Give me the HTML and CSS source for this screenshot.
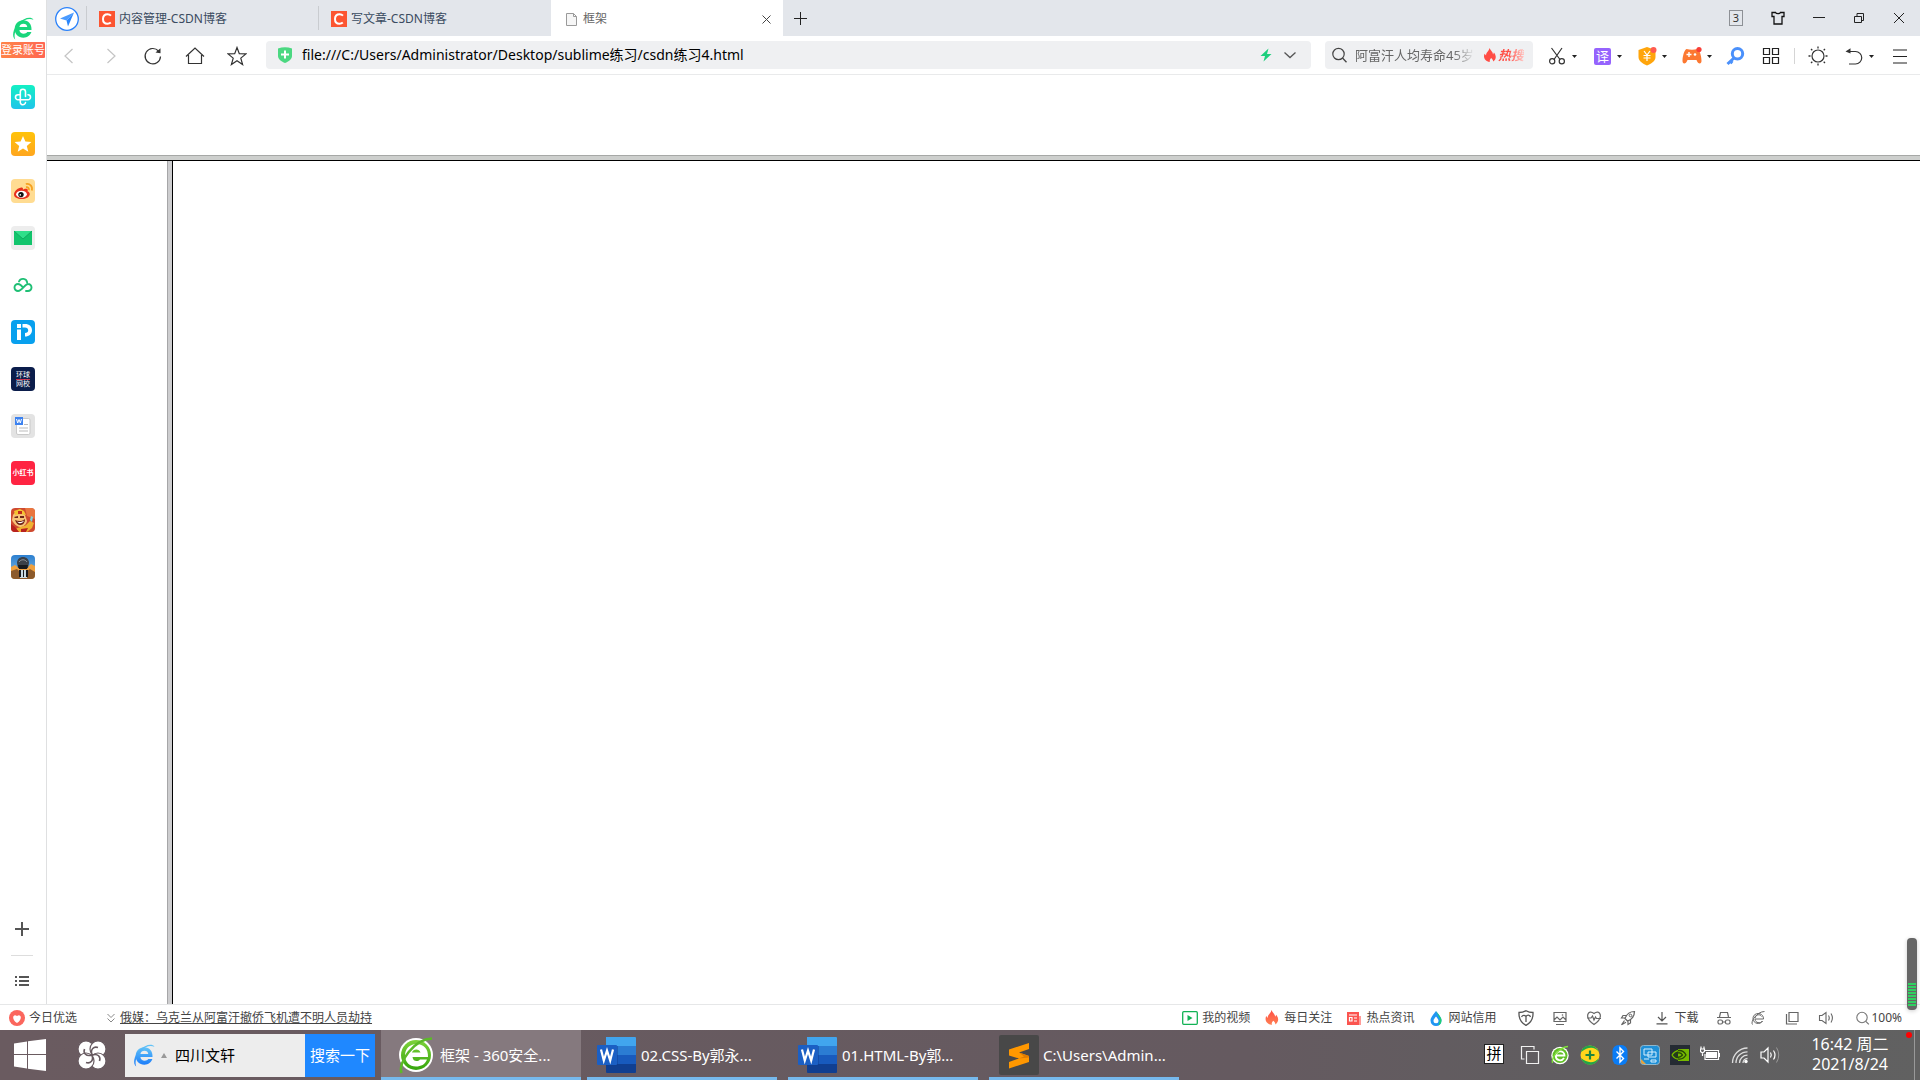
FILE: index.html
```html
<!DOCTYPE html>
<html lang="zh-CN">
<head>
    <meta charset="UTF-8">
    <meta name="viewport" content="width=device-width, initial-scale=1.0">
    <title>框架</title>
    <link rel="stylesheet" href="styles.css">
</head>
<body>
    <!-- shared icons -->
    <svg class="sprite" width="0" height="0" aria-hidden="true">
        <defs>
            <linearGradient id="gTeal" x1="0" y1="0" x2="0" y2="1"><stop offset="0" stop-color="#14f0c4"/><stop offset="1" stop-color="#1fc4ea"/></linearGradient>
            <linearGradient id="gGold" x1="0" y1="0" x2="0" y2="1"><stop offset="0" stop-color="#ffc30a"/><stop offset="1" stop-color="#ffa61e"/></linearGradient>
            <linearGradient id="gIe" x1="0" y1="0" x2="0" y2="1"><stop offset="0" stop-color="#63c4f7"/><stop offset="1" stop-color="#1c7dfa"/></linearGradient>
            <linearGradient id="gGreen" x1="0" y1="0" x2="0" y2="1"><stop offset="0" stop-color="#7fd23c"/><stop offset="1" stop-color="#35a50c"/></linearGradient>
            <linearGradient id="gRed" x1="0" y1="0" x2="0" y2="1"><stop offset="0" stop-color="#ff4f45"/><stop offset="1" stop-color="#ff8053"/></linearGradient>
            <linearGradient id="gSky" x1="0" y1="0" x2="0" y2="1"><stop offset="0" stop-color="#2c7fd0"/><stop offset="1" stop-color="#8cc3e6"/></linearGradient>
        </defs>
        <symbol id="caret" viewBox="0 0 5 3"><path d="M0 0h5L2.500 3z" fill="#222"/></symbol>
        <symbol id="csdn" viewBox="0 0 16 16"><path fill="#fc5531" d="M0 0h16v16H0z"/><path d="M12 4.600A5 5 0 0 0 8.600 3.200C5.600 3.200 4 5.400 4 8s1.500 4.800 4.400 4.800c1.400 0 2.500-.4 3.400-1.200" fill="none" stroke="#fff" stroke-width="2"/></symbol>
        <symbol id="browserE" viewBox="0 0 24 24"><path d="M20.500 14H8.400c.3 2.500 2 3.800 4.300 3.800 1.600 0 2.800-.6 3.600-1.700h4.100c-1.200 3.500-4 5.600-8 5.600-5.200 0-8.700-3.600-8.700-8.700S7.200 4.300 12.300 4.300s8.500 3.800 8.200 9.700zM16.300 11c-.4-2.100-1.700-3.200-3.800-3.200-2.200 0-3.600 1.100-4.100 3.200z"/><path d="M4.200 23.500C.7 21 1.500 13 7.500 7.200 13 1.800 20 .2 22.500 3.800c-5-2-9.600.3-13.400 4.200-4.600 4.700-6.600 10.500-4.900 15.500z"/></symbol>
        <symbol id="word" viewBox="0 0 40 38">
            <path fill="#41a5ee" d="M9 1h29a1 1 0 0 1 1 1v8H9z"/><path fill="#2b7cd3" d="M9 10h30v9H9z"/><path fill="#185abd" d="M9 19h30v9H9z"/><path fill="#103f91" d="M9 28h30v8a1 1 0 0 1-1 1H10a1 1 0 0 1-1-1z"/>
            <path fill="#103f91" opacity=".45" d="M9 10h12v20H9z"/><rect y="9" width="20" height="20" rx="1" fill="#1b5fc4"/>
            <path d="M4 13.500l2.800 11L10 14.500l3.200 10 2.800-11" fill="none" stroke="#fff" stroke-width="2.200"/>
        </symbol>
        <symbol id="flame" viewBox="0 0 14 16"><path d="M6.500 0c.7 2.400 3.800 4.400 4 7.300l1-2.300c2.800 3.500 3 7.500-.8 10.500-.3-2-1.200-3-2.300-4-1.300 1.200-1.800 2.300-1.700 4.500C1.500 15.300-1.200 11 .8 6.500l1.700 2C2.300 4.800 5.800 3.800 6.500 0z"/></symbol>
    </svg>

    <div class="browser">
        <nav class="sidebar" aria-label="侧边栏">
            <button class="account">
                <svg width="24" height="24" fill="#19d67c"><use href="#browserE"/></svg>
                <span>登录账号</span>
            </button>
            <div class="apps">
                <button aria-label="360健康"><svg viewBox="0 0 24 24"><rect width="24" height="24" rx="4" fill="url(#gTeal)"/><path d="M14.500 11.500V6.800a2.600 2.600 0 0 0-5.200 0v10a2.600 2.600 0 0 0 5.200.7M9 9.700H7a2.500 2.500 0 0 0 0 5h10a2.500 2.500 0 0 0 0-5" fill="none" stroke="#fff" stroke-width="1.600" stroke-linecap="round"/></svg></button>
                <button aria-label="收藏夹"><svg viewBox="0 0 24 24"><rect width="24" height="24" rx="4" fill="url(#gGold)"/><path fill="#fff" d="M12 4l2.400 5.500 6 .5-4.600 3.900 1.500 5.900L12 16.600l-5.300 3.200 1.500-5.900L3.600 10l6-.5z"/></svg></button>
                <button aria-label="微博"><svg viewBox="0 0 24 24"><rect width="24" height="24" rx="4" fill="#ffdc92"/><path fill="#e8301c" d="M3 15.500c0-3.500 5-7.500 8-7 1.500.3.800 2 .8 2s3.500-1.500 4.700-.3c.8.900 0 2 0 2s2.300.6 2.300 2.700c0 3-4 5.100-8.200 5.100-4.100 0-7.600-1.700-7.600-4.500z"/><ellipse cx="10.500" cy="15.300" rx="5.400" ry="3.500" fill="#fff"/><circle cx="10" cy="15.600" r="2.700" fill="#111"/><circle cx="9.300" cy="15.900" r=".8" fill="#fff"/><path d="M15 8.200c2-.4 3.400 1 2.900 3M14.800 5c4-.9 7.200 2.200 6 6.500" fill="none" stroke="#f5a01e" stroke-width="1.700"/></svg></button>
                <button aria-label="邮箱"><svg viewBox="0 0 24 24"><rect width="24" height="24" rx="4" fill="#ededed"/><path fill="#12c46c" d="M3 5h18v14H3z"/><path fill="#2fdf8a" d="M3 5h18l-9 8z"/><path d="M3 5l9 8 9-8" fill="none" stroke="#0da158" stroke-width=".8"/></svg></button>
                <button aria-label="云盘"><svg viewBox="0 0 24 24"><path d="M15 18h2a3.500 3.500 0 0 0 0-7c-3.500 0-5.500 7-10 7a3.500 3.500 0 1 1 0-7c2.200 0 3.500 1.500 5 3.500M8 8.500a4.300 4.300 0 0 1 8.200 1" fill="none" stroke="#1fbf75" stroke-width="1.900" stroke-linecap="round"/></svg></button>
                <button aria-label="PP助手"><svg viewBox="0 0 24 24"><rect width="24" height="24" rx="4" fill="#08a0ee"/><path fill="#fff" d="M6 4h4v4H6zM6 9.500h4V20H6zM11.500 4H14c4.500 0 7 2.500 7 6.300 0 3.700-2.800 6.300-7 6.300V13c2 0 3.200-1 3.200-2.700 0-1.800-1.200-2.900-3.200-2.900h-2.500z"/></svg></button>
                <button class="app-text navy"><span>环球</span><span>网校</span></button>
                <button aria-label="文档"><svg viewBox="0 0 24 24"><rect width="24" height="24" rx="4" fill="#e3e3e3"/><rect x="5.500" y="4.500" width="13.500" height="16" rx="1.500" fill="#fff" stroke="#c9c9c9"/><path d="M13 10.500h4M8 14h9M8 17h9" stroke="#bbb"/><path fill="#3c82f0" d="M4 3h8v8H4z"/><path d="M5.500 5l1.200 4L8 5.500 9.300 9l1.200-4" fill="none" stroke="#fff"/></svg></button>
                <button class="app-text red"><span>小红书</span></button>
                <button aria-label="游戏"><svg viewBox="0 0 24 24"><rect width="24" height="24" rx="4" fill="#cf4a30"/><path fill="#e9763f" d="M14 0h6a4 4 0 0 1 4 4v7l-8-3z"/><path fill="#f7c277" d="M2 7c2-4 9-4 12 0l2 6c-1 4-4 6-7 6s-7-4-8-7z"/><path fill="#f4c330" d="M3 3l3-1 3-1 4 2 2 4-5-1-6 1z"/><path fill="#c22b1d" d="M7 3h4v3H7z"/><path fill="#6e2417" d="M3 9l4-1v2H4zM9 8l4 0v2H9zM4 12c4 2 8 1 10-1 0 5-3 6-5 6s-4-2-5-5z"/><path fill="#fff" d="M6 13.500c3 1 5 .5 7-1-1 3-5 4-7 1z"/><path fill="#f0b232" d="M5 21c4-3 9-2 11-5l3-3 4 2-2 5-5 4H8z"/><path fill="#b9221e" d="M0 16l4 3 4 5H4a4 4 0 0 1-4-4zM10 21l7-1-2 4h-5z"/><path fill="#7fd5dc" d="M20 8l2 1-1 5-2-2z"/></svg></button>
                <button aria-label="吃鸡"><svg viewBox="0 0 24 24"><rect width="24" height="24" rx="4" fill="url(#gSky)"/><path fill="#f0a13f" d="M0 12l4-2 4 3h8l4-4 4 2v9a4 4 0 0 1-4 4H4a4 4 0 0 1-4-4z"/><path fill="#8c5a2b" d="M0 16l6-2 2 2h8l3-2 5 3v3a4 4 0 0 1-4 4H4a4 4 0 0 1-4-4z"/><path fill="#c9dbe4" d="M9 15h7v8H9z"/><path fill="#3a4048" d="M6 8c0-8 12-8 12 0l-1 5H7z"/><path fill="#171a1e" d="M7 10h10l-1 4H8zM8 15h2v7H8zM12 15h1v7h-1zM15 15h2v7h-2z"/><path d="M8 7c2-3 6-3 8 0" fill="none" stroke="#8b9299"/></svg></button>
            </div>
            <div class="sidebar-bottom">
                <button aria-label="添加"><svg width="14" height="14"><path d="M7 0v14M0 7h14" stroke="#555" stroke-width="2"/></svg></button>
                <hr>
                <button aria-label="列表"><svg width="14" height="10"><path d="M0 1h2M4 1h10M0 5h2M4 5h10M0 9h2M4 9h10" stroke="#555" stroke-width="2"/></svg></button>
            </div>
        </nav>

        <div class="main">
            <header class="tabbar">
                <button class="nav-logo" aria-label="导航"><svg width="24" height="24"><circle cx="12" cy="12" r="11.300" fill="#fff" stroke="#2b82fa" stroke-width="1.300"/><path fill="#2b86fb" d="M19 5.500L13 19.500l-1.500-6z"/><path fill="#4a9bff" d="M19 5.500L5 11.500l6.500 2z"/></svg></button>
                <button class="tab"><svg width="16" height="16"><use href="#csdn"/></svg><span>内容管理-CSDN博客</span></button>
                <button class="tab"><svg width="16" height="16"><use href="#csdn"/></svg><span>写文章-CSDN博客</span></button>
                <div class="tab active">
                    <svg width="16" height="16"><path d="M3.500 2.500h7l3 3v9h-10zM10.500 2.500v3h3" fill="#f6f6f6" stroke="#9a9a9a"/></svg><span>框架</span>
                    <button class="tab-close" aria-label="关闭标签"><svg width="9" height="9"><path d="M.5.500l8 8M8.500.500l-8 8" stroke="#444"/></svg></button>
                </div>
                <button class="new-tab" aria-label="新标签"><svg width="13" height="13"><path d="M6.500 0v13M0 6.500h13" stroke="#222"/></svg></button>
                <div class="window-buttons">
                    <button class="tab-count">3</button>
                    <button aria-label="皮肤"><svg width="14" height="14"><path d="M1 1.500h3.500c.7 1.600 4.300 1.600 5 0H13v4h-2V13H3V5.500H1z" fill="none" stroke="#111" stroke-width="1.300"/></svg></button>
                    <button aria-label="最小化"><svg width="12" height="14"><path d="M0 6.500h12" stroke="#222"/></svg></button>
                    <button aria-label="还原"><svg width="12" height="12"><path d="M1.500 4.500h7v6h-7zM4 4V1.500h6.500v7H9" fill="none" stroke="#222"/></svg></button>
                    <button aria-label="关闭"><svg width="12" height="12"><path d="M1 1l10 10M11 1L1 11" stroke="#222"/></svg></button>
                </div>
            </header>

            <div class="toolbar">
                <div class="nav-buttons">
                    <button aria-label="后退"><svg width="20" height="20"><path d="M13.500 3L6 10l7.500 7" fill="none" stroke="#c4c4c4" stroke-width="1.200"/></svg></button>
                    <button aria-label="前进"><svg width="20" height="20"><path d="M6.500 3l7.500 7-7.500 7" fill="none" stroke="#c4c4c4" stroke-width="1.200"/></svg></button>
                    <button aria-label="刷新"><svg width="20" height="20"><path d="M17.500 10.500A7.700 7.700 0 1 1 15.500 5" fill="none" stroke="#333" stroke-width="1.200"/><path d="M12.500 6.500l5 .8V2.200z" fill="#333"/></svg></button>
                    <button aria-label="主页"><svg width="20" height="20"><path d="M1 10.500l9-8.500 9 8.500M3.500 9v8.500h13V9" fill="none" stroke="#333" stroke-width="1.200"/></svg></button>
                    <button aria-label="收藏"><svg width="20" height="20"><path d="M10 1.500l2.300 6.200 6.700.2-5.200 4.200 1.800 6.400L10 14.800l-5.600 3.700 1.800-6.400L1 7.900l6.700-.2z" fill="none" stroke="#333" stroke-width="1.200"/></svg></button>
                </div>
                <div class="address">
                    <svg width="14" height="16"><path fill="#4bd881" d="M0 1.500Q7-1 14 1.500V9c0 3.500-3.500 5.500-7 7-3.500-1.500-7-3.500-7-7z"/><path d="M7 3.500v8M3 7.500h8" stroke="#fff" stroke-width="2"/></svg>
                    <input type="text" aria-label="地址" value="file:///C:/Users/Administrator/Desktop/sublime练习/csdn练习4.html">
                    <button aria-label="极速模式"><svg width="12" height="14"><path fill="#1dcf7c" d="M8.500.500L.5 8H5l-1.500 5.500L11.500 6H7z"/></svg></button>
                    <button aria-label="展开"><svg width="14" height="14"><path d="M1.500 4.500l5.500 5 5.500-5" fill="none" stroke="#555" stroke-width="1.300"/></svg></button>
                </div>
                <div class="search">
                    <svg width="15" height="16"><circle cx="6.500" cy="7" r="5.700" fill="none" stroke="#444" stroke-width="1.200"/><path d="M10.500 11l4 4.300" stroke="#444" stroke-width="1.300"/></svg>
                    <input type="text" aria-label="搜索" placeholder="阿富汗人均寿命45岁">
                    <button class="hot"><svg width="14" height="14" fill="#ff4d45"><use href="#flame"/></svg><span>热搜</span></button>
                </div>
                <div class="tools">
                    <button class="tool" aria-label="截图"><svg width="20" height="20"><path d="M4.500 2l8.500 11.500M15 2L7 13.500" stroke="#333" fill="none" stroke-width="1.200"/><circle cx="5.200" cy="15.300" r="2.600" fill="none" stroke="#333" stroke-width="1.200"/><circle cx="14.800" cy="15.300" r="2.600" fill="none" stroke="#333" stroke-width="1.200"/></svg><svg width="5" height="3"><use href="#caret"/></svg></button>
                    <button class="tool"><span class="translate">译</span><svg width="5" height="3"><use href="#caret"/></svg></button>
                    <button class="tool" aria-label="网购"><svg width="20" height="20"><path fill="#ffa50c" d="M10 1l8.500 3v7c0 4-4 6.500-8.500 8.500C5.500 17.500 1.500 15 1.500 11V4z"/><path d="M7 5l3 4 3-4M6.500 9.500h7M6.500 12h7M10 9v6" fill="none" stroke="#fff" stroke-width="1.200"/><circle cx="16.500" cy="4" r="3" fill="#ff5b50"/></svg><svg width="5" height="3"><use href="#caret"/></svg></button>
                    <button class="tool" aria-label="游戏"><svg width="20" height="20"><path fill="#fc7831" d="M4.500 3Q10 4.500 15.500 3c2 .5 4 7 4 12 0 3.500-3.500 3.500-5-1h-9c-1.500 4.500-5 4.500-5 1 0-5 2-11.500 4-12z"/><path d="M7 6v5M4.500 8.500h5" stroke="#fff" stroke-width="1.400"/><circle cx="13" cy="8.500" r="1.300" fill="#fff"/><circle cx="17" cy="3.500" r="2.600" fill="#f93e38"/></svg><svg width="5" height="3"><use href="#caret"/></svg></button>
                </div>
                <div class="tools tools-right">
                    <button class="tool" aria-label="密码"><svg width="20" height="20"><circle cx="12.500" cy="7.800" r="5.200" fill="none" stroke="#4a90fb" stroke-width="3"/><path d="M9 12l-6.500 6M5 15l2.500 2" stroke="#4a90fb" stroke-width="3"/></svg></button>
                    <button class="tool" aria-label="扩展"><svg width="20" height="20"><path d="M2.500 2.500h6v6h-6zM11.500 2.500h6v6h-6zM2.500 11.500h6v6h-6zM11.500 11.500h6v6h-6z" fill="none" stroke="#222" stroke-width="1.200"/></svg></button>
                    <span class="tool-sep"></span>
                    <button class="tool" aria-label="护眼"><svg width="20" height="20"><circle cx="10" cy="10" r="6" fill="none" stroke="#333" stroke-width="1.200"/><path d="M10 .5v2M10 17.500v2M.5 10h2M17.500 10h2M3 3l1.300 1.300M15.700 15.700L17 17M3 17l1.300-1.300M15.700 4.300L17 3" stroke="#333" stroke-width="1.300"/></svg></button>
                    <button class="tool" aria-label="恢复"><svg width="20" height="20"><path d="M3 5.500h8.500a6 6 0 0 1 0 12.500H5" fill="none" stroke="#333" stroke-width="1.200"/><path fill="#333" d="M1.500 5.500l5-3.200v5.200z"/></svg><svg width="5" height="3"><use href="#caret"/></svg></button>
                    <button class="tool" aria-label="菜单"><svg width="20" height="20"><path d="M3 4h14M3 10.500h14M3 17h14" stroke="#222" stroke-width="1.200"/></svg></button>
                </div>
            </div>

            <div class="frameset">
                <section class="frame-top"></section>
                <div class="frame-row">
                    <section class="frame-left"></section>
                    <section class="frame-main"></section>
                </div>
            </div>
        </div>
    </div>

    <footer class="statusbar">
        <a class="status-item" href="#"><svg width="16" height="16"><circle cx="8" cy="8" r="8" fill="#fb665d"/><path fill="#fff" d="M8 13C1.500 8.500 4.500 3 8 6c3.500-3 6.500 2.500 0 7z"/></svg>今日优选</a>
        <a class="news" href="#"><svg width="8" height="10"><path d="M.5 1L4 4.500 7.500 1M.5 5.500L4 9l3.500-3.500" fill="none" stroke="#888"/></svg><span>俄媒：乌克兰从阿富汗撤侨飞机遭不明人员劫持</span></a>
        <div class="status-links">
            <a class="status-item" href="#"><svg width="16" height="16"><rect x=".7" y="1.700" width="14.600" height="12.600" rx="1" fill="none" stroke="#12b255" stroke-width="1.300"/><path fill="#12b255" d="M5.500 5v6l5-3z"/></svg>我的视频</a>
            <a class="status-item" href="#"><svg width="16" height="15" fill="url(#gRed)"><use href="#flame"/></svg>每日关注</a>
            <a class="status-item" href="#"><svg width="16" height="16"><path fill="#ff9b98" d="M10 6h5v9h-5z"/><path fill="#fb544f" d="M1 2h12v13H1z"/><path d="M3 5h8M3.500 7.500H6V11H3.500zM8 8h3M8 11h3" fill="none" stroke="#fff" stroke-width="1.200"/></svg>热点资讯</a>
            <a class="status-item" href="#"><svg width="16" height="16"><path fill="#2196f3" d="M8 1c3 4 5.500 6.500 5.500 9.500a5.500 5.500 0 0 1-11 0C2.500 7.500 5 5 8 1z"/><path fill="#1fcf74" d="M8 1c3 4 5.500 6.500 5.500 9.500 0 2.500-1.500 4.300-3 5L12 9z"/><path fill="#fff" d="M8 6.500c1.500 2 2.500 3 2.500 4.200a2.500 2.500 0 0 1-5 0C5.500 9.500 6.500 8.500 8 6.500z"/></svg>网站信用</a>
        </div>
        <div class="status-icons">
            <button aria-label="安全"><svg width="16" height="16"><path d="M8 .7Q11 2.500 15 2.500c.3 6-1.500 10-7 12.800C2.500 12.500.7 8.500 1 2.500 5 2.500 6 1.800 8 .7zM3.500 7C5 4.500 7 5.500 8 6.500 9 4.500 12 4.500 12.500 7M8 6.500V12" fill="none" stroke="#555" stroke-width="1.300"/></svg></button>
            <button aria-label="图片"><svg width="16" height="16"><path d="M2 2.500h12v9H2zM2 10l3-3 3 3 3-3 3 3M4 14.500h8" fill="none" stroke="#666" stroke-width="1.200"/><circle cx="10.500" cy="5" r=".8" fill="#666"/></svg></button>
            <button aria-label="医生"><svg width="16" height="16"><path d="M8 14.500C-2.500 7.500 2-1.500 8 3.500c6-5 10.500 4 0 11zM1 8h4l1.500-2L8 10l1.500-3 1 1.500H15" fill="none" stroke="#666" stroke-width="1.200"/></svg></button>
            <button aria-label="加速"><svg width="16" height="16"><path d="M14.500 1.500c-5 0-8 3-9.500 7l2.500 2.500c4-1.500 7-4.500 7-9.500zM6.500 5.500H3L1.500 8H5M10.500 9.500V13L8 14.500V11M4.500 10.500l-3 4.300 4.500-2.500" fill="none" stroke="#666" stroke-width="1.200"/><circle cx="10.500" cy="5.500" r="1.300" fill="none" stroke="#666"/></svg></button>
            <button class="status-item"><svg width="16" height="16"><path d="M8 2v9M4 7l4 4 4-4M2.500 13.800h11" fill="none" stroke="#555" stroke-width="1.200"/></svg>下载</button>
            <button aria-label="无痕"><svg width="16" height="16"><path d="M3.500 7l1-4.500h7l1 4.500M1 7.500h14M6.500 12h3" fill="none" stroke="#666" stroke-width="1.200"/><rect x="2" y="10" width="4.500" height="4" rx="1.500" fill="none" stroke="#666" stroke-width="1.200"/><rect x="9.500" y="10" width="4.500" height="4" rx="1.500" fill="none" stroke="#666" stroke-width="1.200"/></svg></button>
            <button aria-label="内核"><svg width="16" height="16"><path d="M13.500 9H5c0 4 5.500 5 7.500 2-2 4-9.500 3-9.500-2.500C3 2 13.500 1.500 13.500 9zM5 8c1-4 5.500-4 6.500-1.500M2.500 14.500C0 12 7 1.500 14.500 1.500" fill="none" stroke="#666"/></svg></button>
            <button aria-label="小窗"><svg width="16" height="16"><path d="M5 2.500h9v9H5zM2.500 4v10H13" fill="none" stroke="#666" stroke-width="1.200"/></svg></button>
            <button aria-label="声音"><svg width="16" height="16"><path d="M1.500 5.500H4l4-3v11l-4-3H1.500zM10.500 5.500q1.500 2.500 0 5M13 3.500q2.800 4.500 0 9" fill="none" stroke="#666" stroke-width="1.100"/></svg></button>
            <button class="status-item zoom"><svg width="16" height="16"><circle cx="8" cy="7.500" r="5.200" fill="none" stroke="#777" stroke-width="1.100"/><path d="M11.800 11.300l3 3" stroke="#777" stroke-width="1.200"/></svg>100%</button>
        </div>
    </footer>

    <footer class="taskbar">
        <button class="start" aria-label="开始"><svg width="32" height="32"><path fill="#fff" d="M0 4.500l13-2V15H0zM14 2.300L32 0v15H14zM0 16h13v13.500l-13-2zM14 16h18v16l-18-2.300z"/></svg></button>
        <button class="pinwheel" aria-label="桌面助手"><svg width="28" height="28"><g fill="#fff" stroke="#675a60" stroke-width="1.200"><circle cx="8" cy="8" r="8"/><circle cx="20" cy="8" r="8"/><circle cx="20" cy="20" r="8"/><circle cx="8" cy="20" r="8"/></g><path d="M14 14C8 16 5 12 6.500 8M14 14c-2-6 2-9 6-7.500M14 14c6-2 9 2 7.500 6M14 14c2 6-2 9-6 7.500" fill="none" stroke="#675a60" stroke-width="1.600"/></svg></button>
        <form class="desk-search">
            <svg width="24" height="24" fill="url(#gIe)"><use href="#browserE"/></svg>
            <svg width="6" height="5"><path fill="#999" d="M3 0l3 5H0z"/></svg>
            <input type="text" aria-label="桌面搜索" value="四川文轩">
            <button type="button">搜索一下</button>
        </form>
        <div class="tasks">
            <button class="task current"><svg width="40" height="40" viewBox="0 0 40 40"><circle cx="20" cy="20" r="17" fill="#fff"/><circle cx="20" cy="20" r="15" fill="url(#gGreen)"/><path fill="#fff" d="M32 22H16.500c.5 3 2 4 4 4 1.500 0 2.500-.5 3.500-1.500h7C29 29.500 25 31.500 20 31.500 13.500 31.500 9 27 9 20.500S13.500 9 20.500 9 32.500 14 32 22zM24.500 17.500c-1-4-7.500-4-8.500 0z"/><path d="M5.500 38C1.500 28 18 4 36 3.500" fill="none" stroke="#5cba28" stroke-width="2.500"/></svg><span>框架 - 360安全...</span></button>
            <button class="task"><svg width="40" height="38"><use href="#word"/></svg><span>02.CSS-By郭永...</span></button>
            <button class="task"><svg width="40" height="38"><use href="#word"/></svg><span>01.HTML-By郭...</span></button>
            <button class="task"><svg width="40" height="40"><rect width="40" height="40" rx="2" fill="#484848"/><path fill="#ff9800" d="M10 14.500L30 8v6l-10 3.500 10 3.500v6l-20 6.500V27l10-3.500-10-3z"/><path fill="#e07c00" d="M20 17.500l10 3.500v1.500L20 23.500l5-2z"/></svg><span>C:\Users\Admin...</span></button>
        </div>
        <div class="tray">
            <button class="ime">拼</button>
            <div class="tray-icons">
                <button aria-label="多任务"><svg width="20" height="20"><path d="M6.500 6.500h12v12h-12zM4.500 14H1.500V1.500H14v3" fill="none" stroke="#f0f0f0" stroke-width="1.200"/></svg></button>
                <button aria-label="浏览器"><svg width="20" height="20"><circle cx="10" cy="10.500" r="8.700" fill="#fff"/><circle cx="10" cy="10.500" r="7.500" fill="#62bf27"/><path d="M6 10.500h8.500c0-5.500-8.500-5.500-8.700.5 0 5 6 5.500 8.200 2" fill="none" stroke="#fff" stroke-width="1.800"/><path d="M2.500 18C1 12 10 2 18 1.500" fill="none" stroke="#7fe03a" stroke-width="1.300"/></svg></button>
                <button aria-label="安全卫士"><svg width="20" height="20"><circle cx="10" cy="10" r="9.500" fill="#ffd51c"/><path fill="#22a648" d="M1 7C3-1 15-2 19 7 14 1 8 2 1 7zM1 13c3 9 15 9 18 0-5 6-12 5-18 0z"/><path d="M10 5.500v9M5.500 10h9" stroke="#1e8540" stroke-width="2.200"/></svg></button>
                <button aria-label="蓝牙"><svg width="20" height="20"><rect x="2.500" width="15" height="20" rx="6" fill="#0a7cf5"/><path d="M6.500 6.500l7 7L10 17V3l3.500 3.500-7 7" fill="none" stroke="#fff" stroke-width="1.400"/></svg></button>
                <button aria-label="控制中心"><svg width="20" height="20"><rect x=".5" y=".5" width="19" height="19" rx="3" fill="#1f8fd6" stroke="#8fb7cc"/><path d="M4 4h8v6H4zM8 7h8v5H8zM4 14h5M11 15h5v2h-5z" fill="none" stroke="#d6f0ff"/><path fill="#e8a33c" d="M1 14l5 5H3a2 2 0 0 1-2-2z"/></svg></button>
                <button aria-label="显卡"><svg width="20" height="20"><path fill="#252b33" d="M0 0h20v20H0z"/><path fill="#76b900" d="M8 4h11v12H8z"/><path d="M2 10c4-6 11-6 14 0-3 5-9 6-14 0zM5 10c2-3 6-3 7.500 0C10 13 7 13 5 10z" fill="none" stroke="#274806" stroke-width="1.300"/><path d="M2 10c2-3 4-4 6-4.300M2 10c2 3 4 4 6 4" fill="none" stroke="#76b900" stroke-width="1.300"/></svg></button>
                <button aria-label="电源"><svg width="20" height="20"><path d="M4.500 5.500h14v9H5V9" fill="none" stroke="#fff" stroke-width="1.200"/><path fill="#fff" d="M6 7h11v6H6zM19 8h1v4h-1z"/><path d="M1 1.500V4M4 1.500V4M.5 4h4v2.500L2.500 8l-2-1.500zM2.500 8v3" fill="none" stroke="#fff" stroke-width="1.200"/></svg></button>
                <button aria-label="网络"><svg width="20" height="20"><g fill="none" stroke="#ddd" stroke-width="1.300"><path d="M2.500 18C2.500 10 9 3 17.500 3M6 18C6 11.500 11 6.800 17.500 6.800M9.500 18c0-4.500 3.500-7.800 8-7.800M13 18c0-2.500 2-4.500 4.500-4.500"/></g><circle cx="16" cy="16.500" r="1.700" fill="#fff"/></svg></button>
                <button aria-label="音量"><svg width="20" height="20"><path d="M1 7h3l4-4v14l-4-4H1zM10.500 7.500q1.500 2.500 0 5M13.500 5.500q3 4.500 0 9" fill="none" stroke="#fff" stroke-width="1.200"/><path d="M16.500 2.500q4.500 7.500 0 15" fill="none" stroke="#999"/></svg></button>
            </div>
            <button class="clock"><span>16:42 周二</span><span>2021/8/24</span></button>
            <button class="show-desktop" aria-label="显示桌面"></button>
        </div>
    </footer>

    <!-- floating volume level and notice dot -->
    <div class="level"><span></span></div>
    <i class="notice"></i>
</body>
</html>
```
FILE: styles.css
```css
* {
    box-sizing: border-box;
}
body {
    margin: 0;
    height: 100vh;
    display: flex;
    flex-direction: column;
    overflow: hidden;
    background: #fff;
    color: #333;
    font-family: "Noto Sans", "Noto Sans CJK SC", sans-serif;
    font-size: 12px;
    line-height: 16px;
}
button, input {
    margin: 0;
    padding: 0;
    border: none;
    background: none;
    color: inherit;
    font: inherit;
}
button {
    cursor: pointer;
}
input {
    outline: none;
    min-width: 0;
}
a {
    color: inherit;
    text-decoration: none;
}
svg {
    display: block;
    flex: none;
}
.sprite {
    position: absolute;
}
.browser {
    flex: 1;
    display: flex;
    min-height: 0;
}

/* left sidebar */
.sidebar {
    width: 47px;
    flex: none;
    display: flex;
    flex-direction: column;
    align-items: center;
    border-right: 1px solid #dfe0e1;
}
.account {
    display: flex;
    flex-direction: column;
    align-items: center;
    padding-top: 16px;
}
.account span {
    width: 44px;
    margin-top: 2px;
    border-radius: 1px;
    background: linear-gradient(to right, #ff8447, #ff6653);
    color: #fff;
    font-size: 11px;
    line-height: 16px;
    white-space: nowrap;
}
.apps {
    display: flex;
    flex-direction: column;
    gap: 23px;
    margin-top: 27px;
}
.apps button, .apps svg {
    display: block;
    width: 24px;
    height: 24px;
}
.apps .app-text {
    display: flex;
    flex-direction: column;
    justify-content: center;
    align-items: center;
    border-radius: 4px;
    color: #fff;
    font-size: 7px;
    line-height: 8px;
    white-space: nowrap;
}
.navy {
    background: #0b1d4b;
}
.navy span + span {
    border-top: 1px solid #c8324e;
}
.red {
    background: #ff2442;
    font-weight: bold;
}
.sidebar-bottom {
    display: flex;
    flex-direction: column;
    align-items: center;
    margin-top: auto;
    padding: 0 2px 18px 0;
}
.sidebar-bottom hr {
    width: 22px;
    margin: 19px 0 20px;
    border: none;
    border-top: 1px solid #ddd;
}

/* tabs */
.main {
    flex: 1;
    display: flex;
    flex-direction: column;
    min-width: 0;
}
.tabbar {
    height: 36px;
    display: flex;
    align-items: center;
    background: #e3e6eb;
}
.nav-logo {
    padding: 2px 8px 0 8px;
}
.tab {
    width: 232px;
    height: 36px;
    display: flex;
    align-items: center;
    gap: 4px;
    padding: 2px 12px 0;
    color: #3a4b60;
    position: relative;
    white-space: nowrap;
}
.tab:not(.active)::before {
    content: "";
    position: absolute;
    left: -1px;
    top: 6px;
    height: 24px;
    border-left: 1px solid #c9ccd0;
}
.tab.active {
    background: #fff;
    color: #666;
}
.tab-close {
    margin-left: auto;
}
.new-tab {
    padding: 0 11px;
}
.window-buttons {
    display: flex;
    align-items: center;
    gap: 28px;
    margin-left: auto;
    padding-right: 15px;
}
.tab-count {
    width: 14px;
    height: 16px;
    border: 1px solid #8d9095;
    font-size: 11px;
    line-height: 14px;
}

/* toolbar */
.toolbar {
    height: 39px;
    display: flex;
    align-items: center;
    border-bottom: 1px solid #e9eaeb;
}
.nav-buttons {
    display: flex;
    gap: 22px;
    padding: 2px 19px 0 12px;
}
.address, .search {
    height: 28px;
    display: flex;
    align-items: center;
    border-radius: 4px;
    background: #eff0f2;
}
.address {
    flex: 1;
    padding: 0 14px 0 12px;
}
.address input {
    flex: 1;
    margin-left: 10px;
    color: #000;
    font-size: 14px;
}
.address button + button {
    margin-left: 11px;
}
.search {
    width: 208px;
    margin: 0 14px;
    padding: 0 9px 0 7px;
}
.search input {
    flex: 1;
    margin: 0 8px;
    font-size: 13px;
    -webkit-mask-image: linear-gradient(to right, #000 82%, transparent);
    mask-image: linear-gradient(to right, #000 82%, transparent);
}
.search input::placeholder {
    color: #666;
    opacity: 1;
}
.hot {
    display: flex;
    align-items: center;
    gap: 1px;
    font-size: 13px;
    font-weight: bold;
    font-style: italic;
}
.hot span {
    background: linear-gradient(to right, #ff4d45 40%, #ffc9c6);
    -webkit-background-clip: text;
    background-clip: text;
    color: transparent;
}
.tools {
    display: flex;
    align-items: center;
    gap: 15px;
    padding-top: 2px;
}
.tools-right {
    gap: 16px;
    padding: 2px 10px 0 13px;
}
.tool {
    display: flex;
    align-items: center;
    gap: 5px;
}
.translate {
    width: 17px;
    height: 17px;
    margin: 0 1px 0 2px;
    border-radius: 2px;
    background: #9563fd;
    color: #fff;
    font-size: 13px;
    line-height: 16px;
}
.tool-sep {
    height: 16px;
    margin: 0 -3px;
    border-left: 1px solid #d5d5d5;
}

/* page frames */
.frameset {
    flex: 1;
    display: flex;
    flex-direction: column;
}
.frame-top {
    height: 86px;
    border-bottom: 1px solid #000;
    box-shadow: inset 0 -4px #cdcfcd, inset 0 -5px #a6a8a6;
}
.frame-row {
    flex: 1;
    display: flex;
}
.frame-left {
    width: 126px;
    border-right: 1px solid #000;
    box-shadow: inset -4px 0 #cdcdcf, inset -5px 0 #a6a6a8;
}
.frame-main {
    flex: 1;
}

/* status bar */
.statusbar {
    height: 26px;
    display: flex;
    align-items: center;
    border-top: 1px solid #e6e7e8;
    padding: 0 18px 0 9px;
    white-space: nowrap;
    color: #444;
}
.status-item {
    display: flex;
    align-items: center;
    gap: 4px;
}
.news {
    display: flex;
    align-items: center;
    gap: 5px;
    margin-left: 30px;
}
.news span {
    text-decoration: underline;
}
.status-links {
    display: flex;
    gap: 14px;
    margin-left: auto;
}
.status-icons {
    display: flex;
    align-items: center;
    gap: 18px;
    margin-left: 22px;
}
.zoom {
    gap: 1px;
    margin-left: 2px;
}

/* taskbar */
.taskbar {
    height: 50px;
    display: flex;
    align-items: center;
    background: linear-gradient(to right, #6a5b60, #655a60 65%, #5f5e60 85%, #616161);
    color: #fff;
    font-size: 15px;
    line-height: 20px;
    white-space: nowrap;
}
.start {
    padding: 0 32px 0 14px;
}
.desk-search {
    width: 250px;
    height: 43px;
    display: flex;
    align-items: center;
    gap: 5px;
    margin: 0 6px 0 19px;
    padding-left: 7px;
    background: #ededed;
}
.desk-search input {
    flex: 1;
    margin-left: 3px;
    color: #000;
}
.desk-search button {
    width: 70px;
    height: 43px;
    background: #1f88ff;
}
.tasks {
    display: flex;
    gap: 1px;
}
.task {
    width: 200px;
    height: 50px;
    display: flex;
    align-items: center;
    gap: 4px;
    padding: 0 15px;
    position: relative;
}
.task::after {
    content: "";
    position: absolute;
    left: 5px;
    right: 5px;
    bottom: 0;
    height: 3px;
    background: #76b9ed;
}
.current {
    background: #85797e;
}
.current::after {
    left: 0;
    right: 0;
}
.tray {
    display: flex;
    align-items: center;
    margin-left: auto;
}
.ime {
    width: 20px;
    height: 20px;
    margin: 0 16px 3px 0;
    border: 1px solid #222;
    background: #fff;
    color: #000;
    line-height: 17px;
}
.tray-icons {
    display: flex;
    gap: 10px;
}
.clock {
    width: 100px;
    display: flex;
    flex-direction: column;
    align-items: center;
    margin: 0 14px 2px 20px;
    font-size: 16px;
}
.show-desktop {
    width: 6px;
    height: 50px;
    border-left: 1px solid #999;
}

/* overlays */
.level {
    position: absolute;
    right: 3px;
    bottom: 70px;
    width: 10px;
    height: 72px;
    padding: 0 1px 3px;
    display: flex;
    align-items: flex-end;
    border-radius: 4px;
    background: #666;
    box-shadow: 0 1px 4px rgba(0, 0, 0, 0.2);
}
.level span {
    width: 8px;
    height: 24px;
    background: repeating-linear-gradient(#2fd060 0 2px, #666 2px 3px);
}
.notice {
    position: absolute;
    right: 8px;
    bottom: 42px;
    width: 6px;
    height: 6px;
    border-radius: 50%;
    background: #f00;
}
```
